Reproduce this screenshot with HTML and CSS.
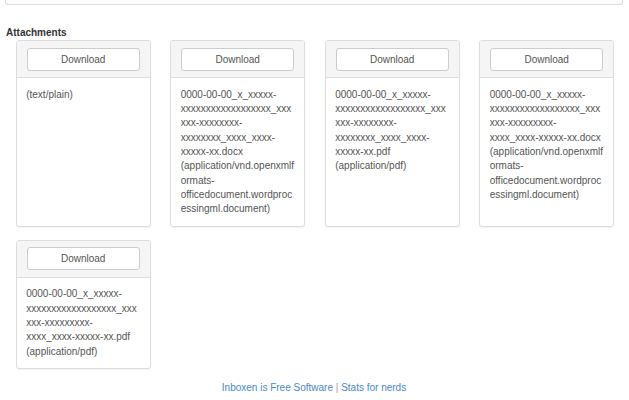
FILE: index.html
```html
<!DOCTYPE html>
<html>
<head>
<meta charset="utf-8">
<link rel="stylesheet" href="styles.css">
</head>
<body>
<div class="container">
  <div class="topbox"></div>
  <div class="heading">Attachments</div>
  <div class="grid">
    <div class="card">
      <div class="card-head"><button class="btn">Download</button></div>
      <div class="card-body"><span class="mime">(text/plain)</span></div>
    </div>
    <div class="card">
      <div class="card-head"><button class="btn">Download</button></div>
      <div class="card-body"><span class="fname">0000-00-00_x_xxxxx-xxxxxxxxxxxxxxxxxx_xxxxxx-xxxxxxxx-xxxxxxxx_xxxx_xxxx-xxxxx-xx.docx</span><span class="mime">(application/vnd.openxmlformats-officedocument.wordprocessingml.document)</span></div>
    </div>
    <div class="card">
      <div class="card-head"><button class="btn">Download</button></div>
      <div class="card-body"><span class="fname">0000-00-00_x_xxxxx-xxxxxxxxxxxxxxxxxx_xxxxxx-xxxxxxxx-xxxxxxxx_xxxx_xxxx-xxxxx-xx.pdf</span><span class="mime">(application/pdf)</span></div>
    </div>
    <div class="card">
      <div class="card-head"><button class="btn">Download</button></div>
      <div class="card-body"><span class="fname">0000-00-00_x_xxxxx-xxxxxxxxxxxxxxxxxx_xxxxxx-xxxxxxxxx-xxxx_xxxx-xxxxx-xx.docx</span><span class="mime">(application/vnd.openxmlformats-officedocument.wordprocessingml.document)</span></div>
    </div>
    <div class="card">
      <div class="card-head"><button class="btn">Download</button></div>
      <div class="card-body"><span class="fname">0000-00-00_x_xxxxx-xxxxxxxxxxxxxxxxxx_xxxxxx-xxxxxxxxx-xxxx_xxxx-xxxxx-xx.pdf</span><span class="mime">(application/pdf)</span></div>
    </div>
  </div>
  <div class="footer"><a class="link" href="#">Inboxen is Free Software</a> <span class="sep">|</span> <a class="link" href="#">Stats for nerds</a></div>
</div>
</body>
</html>
```
FILE: styles.css
```css
html, body {
  margin: 0;
  padding: 0;
  background: #fff;
}
body {
  font-family: "Liberation Sans", Arial, sans-serif;
  font-size: 10px;
  line-height: 14.3px;
  color: #555;
}
.container {
  padding: 0 6px 0 5px;
}
.topbox {
  box-sizing: border-box;
  height: 5px;
  border: 1px solid #ddd;
  border-top: 0;
  border-radius: 0 0 3px 3px;
  background: #fcfcfc;
}
.heading {
  margin-top: 21px;
  padding-left: 1px;
  font-weight: bold;
  color: #333;
}
.grid {
  display: grid;
  grid-template-columns: repeat(4, 135px);
  column-gap: 19.5px;
  row-gap: 13px;
  padding-left: 10.7px;
}
.card {
  border: 1px solid #ddd;
  border-radius: 3px;
  background: #fff;
  box-shadow: 0 1px 1px rgba(0, 0, 0, 0.05);
  overflow: hidden;
}
.card-head {
  background: #f5f5f5;
  border-bottom: 1px solid #ddd;
  padding: 6.5px 10px;
}
.btn {
  display: block;
  box-sizing: border-box;
  width: 100%;
  height: 23px;
  margin: 0;
  padding: 0;
  border: 1px solid #ccc;
  border-radius: 3px;
  background: #fff;
  font-family: "Liberation Sans", Arial, sans-serif;
  font-size: 10px;
  color: #555;
}
.card-body {
  padding: 9.5px 9.5px;
  overflow-wrap: break-word;
  word-wrap: break-word;
}
.fname, .mime {
  display: block;
}
.footer {
  margin-top: 12px;
  text-align: center;
}
.link {
  color: #4a86c5;
  text-decoration: none;
}
.sep {
  color: #999;
}
```
